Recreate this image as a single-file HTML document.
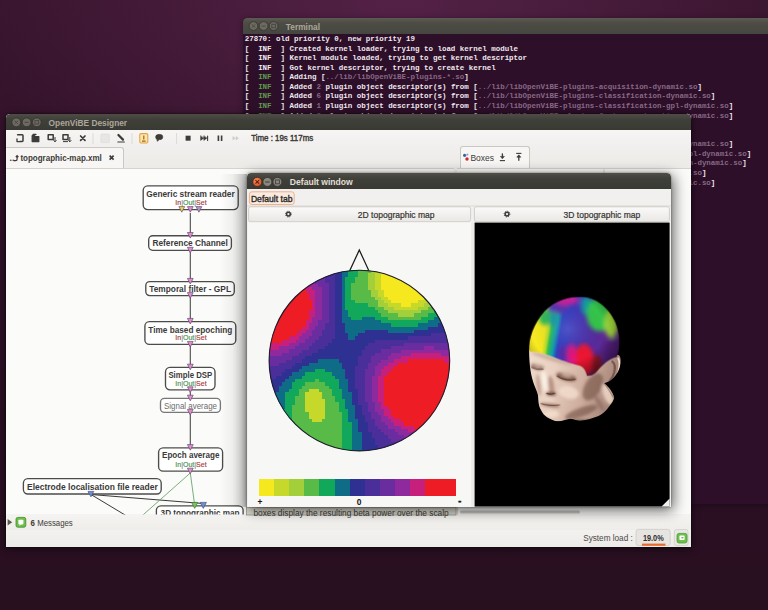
<!DOCTYPE html>
<html><head><meta charset="utf-8"><title>OpenViBE Designer</title>
<style>
*{box-sizing:border-box}
html,body{margin:0;padding:0}
body{width:768px;height:610px;overflow:hidden;position:relative;font-family:"Liberation Sans",sans-serif;background:#2a0f24}
.a{position:absolute}
#bg{position:absolute;left:0;top:0;width:768px;height:610px;
 background:
  radial-gradient(ellipse 430px 250px at 400px 0px, rgba(90,36,76,.8), rgba(90,36,76,0) 100%),
  linear-gradient(180deg,#38152e 0px,#34132b 120px,#2d1027 330px,#2a0f22 520px,#28101f 610px)}
/* ---------- terminal ---------- */
#term{position:absolute;left:243.4px;top:17.5px;width:540px;height:486.5px;background:#2d0f29;border-radius:4px 0 0 0;overflow:hidden;box-shadow:0 1px 6px rgba(0,0,0,.35)}
#term .tb{position:absolute;left:0;top:0;right:0;height:16px;background:linear-gradient(#5b5a53,#4d4d46 30%,#45463f);border-radius:4px 0 0 0}
.wb{position:absolute;width:9px;height:9px;border-radius:50%;background:#6a675f;border:1px solid #3a3833}
.ttl{position:absolute;font-weight:bold;font-size:9px;color:#bdb9ad;letter-spacing:.3px;white-space:nowrap}
#term pre{position:absolute;left:1.3px;top:17.6px;margin:0;font-family:"Liberation Mono",monospace;font-weight:bold;font-size:7.47px;line-height:9.57px;color:#efe9ee;white-space:pre}
#term pre i{font-style:normal;color:#5f9a4e}
#term pre b{font-weight:bold;color:#886886}
/* ---------- designer ---------- */
#des{position:absolute;left:6px;top:113.8px;width:684.6px;height:433.2px;background:#f1f0ee;border-radius:4px 4px 0 0;box-shadow:0 0 2px rgba(0,0,0,.75),0 2px 9px rgba(0,0,0,.55);overflow:hidden}
#des .tb{position:absolute;left:0;top:0;right:0;height:16.5px;background:linear-gradient(#4d4c45,#40403a 35%,#3a3a34);border-radius:4px 4px 0 0}
#des .tool{position:absolute;left:0;top:16.4px;right:0;height:17px;background:linear-gradient(#f6f5f3,#f0efed)}
#des .tabs{position:absolute;left:0;top:33px;right:0;height:21.5px;background:linear-gradient(#f0efed,#ecebe8)}
#des .tab1{position:absolute;left:0;top:33.5px;width:118px;height:22px;background:#f7f6f5;border:1px solid #cbc8c2;border-bottom:none;border-left:none;border-radius:0 3px 0 0}
#des .tab2{position:absolute;left:453.5px;top:32.3px;width:70px;height:22.7px;background:#f7f6f5;border:1px solid #cbc8c2;border-bottom:none;border-radius:3px 3px 0 0}
#des .canvas{position:absolute;left:0;top:54.5px;width:448px;height:346px;background:#fbfbfa;border-top:1px solid #d6d3ce}
#des .rpane{position:absolute;left:451px;top:54.5px;width:234px;height:346px;background:#fafaf9;border-top:1px solid #d6d3ce}
#des .msg{position:absolute;left:0;top:400.7px;right:0;height:16px;background:linear-gradient(#f5f4f2,#eeedea)}
#des .stat{position:absolute;left:0;top:416.7px;right:0;height:16.5px;background:linear-gradient(#f3f2f0,#edebe8)}
.t{position:absolute;white-space:nowrap;color:#3c3b37;line-height:1}
svg{position:absolute;overflow:visible}
/* ---------- default window ---------- */
#dw{position:absolute;left:247px;top:173.3px;width:423.7px;height:333.7px;background:#f1f0ee;border-radius:4px 4px 0 0;box-shadow:2px 3px 14px rgba(0,0,0,.65),0 0 2px rgba(0,0,0,.5);overflow:hidden}
#dw .tb{position:absolute;left:0;top:0;right:0;height:15.9px;background:linear-gradient(#4f4e47,#40403a 35%,#3a3a34);border-radius:4px 4px 0 0}
#dw .btn{position:absolute;top:33px;height:15px;border:1px solid #cfccc6;border-radius:2px;background:linear-gradient(#fbfaf9,#eceae7)}
</style></head>
<body>
<div id="bg"></div>

<div id="term">
 <div class="tb"></div>
 <svg style="left:0;top:0" width="120" height="16"><g stroke="#35332f" stroke-width=".8" fill="#6d6a62"><circle cx="10.5" cy="8.0" r="4.4"/><circle cx="20.6" cy="8.0" r="4.4"/><circle cx="30.6" cy="8.0" r="4.4"/></g><g stroke="#494741" stroke-width="1" fill="none"><path d="M8.9 6.4l3.2 3.2M12.1 6.4l-3.2 3.2"/><path d="M18.6 8.1h4"/><rect x="28.8" y="6.3" width="3.6" height="3.4"/></g><text x="42.8" y="11.6" font-size="9" font-weight="bold" fill="#aba79b" textLength="34.2" lengthAdjust="spacingAndGlyphs" font-family="'Liberation Sans',sans-serif">Terminal</text></svg>
<pre>27870: old priority 0, new priority 19
[  INF  ] Created kernel loader, trying to load kernel module
[  INF  ] Kernel module loaded, trying to get kernel descriptor
[  INF  ] Got kernel descriptor, trying to create kernel
[  <i>INF</i>  ] Adding [<b>../lib/libOpenViBE-plugins-*.so</b>]
[  <i>INF</i>  ] Added <b>2</b> plugin object descriptor(s) from [<b>../lib/libOpenViBE-plugins-acquisition-dynamic.so</b>]
[  <i>INF</i>  ] Added <b>6</b> plugin object descriptor(s) from [<b>../lib/libOpenViBE-plugins-classification-dynamic.so</b>]
[  <i>INF</i>  ] Added <b>1</b> plugin object descriptor(s) from [<b>../lib/libOpenViBE-plugins-classification-gpl-dynamic.so</b>]
[  <i>INF</i>  ] Added <b>8</b> plugin object descriptor(s) from [<b>../lib/libOpenViBE-plugins-feature-extraction-dynamic.so</b>]
[  <i>INF</i>  ] Added <b>9</b> plugin object descriptor(s) from [<b>../lib/libOpenViBE-plugins-file-io-dynamic.so</b>]
[  <i>INF</i>  ] Added <b>1</b> plugin object descriptor(s) from [<b>../lib/libOpenViBE-plugins-matlab-dynamic.so</b>]
[  <i>INF</i>  ] Added <b>28</b> plugin object descriptor(s) from [<b>../lib/libOpenViBE-plugins-signal-processing-dynamic.so</b>]
[  <i>INF</i>  ] Added <b>15</b> plugin object descriptor(s) from [<b>../lib/libOpenViBE-plugins-signal-processing-gpl-dynamic.so</b>]
[  <i>INF</i>  ] Added <b>12</b> plugin object descriptor(s) from [<b>../lib/libOpenViBE-plugins-simple-visualisation-dynamic.so</b>]
[  <i>INF</i>  ] Added <b>27</b> plugin object descriptor(s) from [<b>../lib/libOpenViBE-plugins-stimulation-dynamic.so</b>]
[  <i>INF</i>  ] Added <b>34</b> plugin object descriptor(s) from [<b>../lib/libOpenViBE-plugins-stream-codecs-dynamic.so</b>]</pre>
</div>

<div id="des">
 <div class="tb"></div>
 <svg style="left:0;top:0" width="200" height="17"><g stroke="#35332f" stroke-width=".8" fill="#6d6a62"><circle cx="10.3" cy="8.3" r="4.4"/><circle cx="20.6" cy="8.3" r="4.4"/><circle cx="30.8" cy="8.3" r="4.4"/></g><g stroke="#494741" stroke-width="1" fill="none"><path d="M8.7 6.7l3.2 3.2M11.9 6.7l-3.2 3.2"/><path d="M18.6 8.4h4"/><rect x="29.0" y="6.6" width="3.6" height="3.4"/></g><text x="42.6" y="11.6" font-size="9" font-weight="bold" fill="#aba79b" textLength="78.5" lengthAdjust="spacingAndGlyphs" font-family="'Liberation Sans',sans-serif">OpenViBE Designer</text></svg>
 <div class="tool"></div>
 <div class="tabs"></div>
 <div class="tab1"></div>
 <div class="tab2"></div>
 <div class="canvas"></div>
 <div class="rpane"></div>
 <div class="msg"></div>
 <div class="stat"></div>
</div>
<svg class="a" style="left:0;top:0" width="768" height="610" viewBox="0 0 768 610" font-family="'Liberation Sans',sans-serif">
<defs>
 <clipPath id="cv"><rect x="6" y="169" width="448" height="345.5"/></clipPath>
 <linearGradient id="shR" x1="0" x2="1" y1="0" y2="0"><stop offset="0" stop-color="#000" stop-opacity="0"/><stop offset=".45" stop-color="#000" stop-opacity=".05"/><stop offset=".8" stop-color="#000" stop-opacity=".15"/><stop offset="1" stop-color="#000" stop-opacity=".26"/></linearGradient>
</defs>
<!-- toolbar icons -->
<g stroke="#3c3b37" fill="none" stroke-width="1.3" stroke-linejoin="round" stroke-linecap="round">
 <!-- new -->
 <path d="M17.6 134.8h4.6q.8 0 .8.8v5q0 .8-.8.8h-2.2" stroke-width="1.5"/><path d="M17 138.8v2.8h2.6" stroke-width="1.3"/>
 <!-- open -->
 <path d="M32.2 135.6h2.4l.8 1h3.4v5h-6.6z" fill="#3c3b37"/><path d="M33 134.4h3" stroke-width="1.2"/>
 <!-- save -->
 <path d="M48.2 134.8h5v4.8h-5z" stroke-width="1.5"/><path d="M55 137.4v4.2M53.8 140.6l1.2 1.2 1.2-1.2" stroke-width="1"/>
 <!-- save as -->
 <path d="M63 134.8h5v4.8h-5z" stroke-width="1.5"/><path d="M69.8 137.4v4.2M68.6 140.6l1.2 1.2 1.2-1.2" stroke-width="1"/><path d="M63.4 141.6h4.2" stroke-width="1"/>
 <!-- close -->
 <path d="M80.6 136l4.4 4.4M85 136l-4.4 4.4" stroke-width="1.7"/>
 <!-- pen -->
 <path d="M118.4 135l4.6 4.6" stroke-width="2.2"/><path d="M117.8 142h6.6" stroke-width="1"/>
 <!-- bubble -->
 <path d="M155.8 136.2q0-1.8 3.4-1.8t3.4 1.8v1.6q0 1.8-3.4 1.8l-2 1.6v-1.8q-1.4-.4-1.4-1.6z" fill="#3c3b37" stroke-width=".8"/>
 <!-- stop, next, pause -->
 <rect x="185.6" y="135.7" width="5" height="5" fill="#3c3b37" stroke="none"/>
 <path d="M200.6 136v4.4l3-2.2zM203.8 136v4.4l3-2.2z" fill="#3c3b37" stroke-width=".5"/><path d="M207.6 136v4.4" stroke-width="1.1"/>
 <path d="M218.4 135.6v5.4M221.6 135.6v5.4" stroke-width="1.6" stroke-linecap="butt"/>
</g>
<rect x="100.8" y="134" width="8.6" height="8.6" rx="1" fill="#e8e6e3" stroke="#dcd9d4" stroke-width=".6"/>
<rect x="139.8" y="133.6" width="8" height="9.4" rx="1.2" fill="#fbe6b0" stroke="#e8a33c" stroke-width="1.1"/>
<path d="M143.8 135.6v4M142 141.2h3.6" stroke="#a4641a" stroke-width="1.2" fill="none"/>
<g stroke="#dddad5" stroke-width="1"><path d="M93 133v11M132 133v11M176.6 133v11"/></g>
<g fill="#cfccc6" stroke="none"><path d="M232.6 136v4.4l3-2.2zM235.8 136v4.4l3-2.2z"/></g>
<text x="251.2" y="141.3" font-size="8.4" fill="#3c3b37" textLength="62" lengthAdjust="spacingAndGlyphs" stroke="#3c3b37" stroke-width=".4">Time : 19s 117ms</text>
<!-- tab label -->
<text x="9.6" y="161.2" font-size="8.8" font-weight="bold" fill="#3c3b37">..</text>
<path d="M13.6 160.6h2.2q1.3 0 1.3-1.3v-3.2M15.8 157.2l1.3-1.6 1.3 1.6" stroke="#3c3b37" stroke-width="1.2" fill="none"/>
<text x="20.4" y="161.2" font-size="9" font-weight="bold" fill="#3c3b37" textLength="81.4" lengthAdjust="spacingAndGlyphs">topographic-map.xml</text>
<path d="M109.6 155.6l4 4M113.6 155.6l-4 4" stroke="#3c3b37" stroke-width="1.6" fill="none"/>
<!-- boxes tab -->
<circle cx="464.6" cy="155.3" r="1.6" fill="#3465a4"/><circle cx="467" cy="159" r="1.7" fill="#cc2a2a"/><circle cx="467.4" cy="154.6" r="1.1" fill="#8aa8d0"/>
<text x="470.4" y="160.6" font-size="8.6" fill="#3c3b37" textLength="23.6" lengthAdjust="spacingAndGlyphs">Boxes</text>
<g stroke="#3c3b37" stroke-width="1.3" fill="#3c3b37" stroke-linejoin="round">
 <path d="M502.4 153.4v3.4" /><path d="M500.4 156.4h4l-2 2.4z" stroke-width=".6"/><path d="M499.8 160.6h5.2" stroke-width="1.1"/>
 <path d="M516.2 153.4h5.2" stroke-width="1.1"/><path d="M516.8 157.2h4l-2-2.4z" stroke-width=".6"/><path d="M518.8 157v3.8"/>
</g>
<!-- right pane header line + column sep -->
<path d="M604 169v12" stroke="#d9d6d1" stroke-width="1"/>
<!-- graph -->
<g clip-path="url(#cv)">
 <g stroke="#4a4a48" stroke-width="1.1" fill="none">
  <path d="M190.3 213v22M190.3 250.5v31M190.3 295.5v26M190.3 345v22.5M190.3 390v8.5M190.3 412.5v36"/>
  <path d="M91 494.5L203 503.5M91 494.5L150 530" stroke="#3a3a3a" stroke-width="1"/>
  <path d="M190.3 473L194.4 503M190.3 473L126 530" stroke="#6aa56a" stroke-width=".9"/>
 </g>
 <g fill="#fff" stroke="#4c4c4a" stroke-width="1.35">
  <rect x="143.2" y="185.8" width="95" height="23.8" rx="4.5"/>
  <rect x="148.7" y="235.7" width="82.7" height="14.6" rx="4"/>
  <rect x="145.8" y="281.6" width="88.5" height="14" rx="4"/>
  <rect x="144.9" y="321.6" width="90.9" height="22.8" rx="4.5"/>
  <rect x="165.5" y="367.4" width="49.5" height="22.4" rx="4.5"/>
  <rect x="160.5" y="398.4" width="59.9" height="14" rx="4" stroke="#777"/>
  <rect x="158.6" y="447.8" width="64" height="23.4" rx="4.5"/>
  <rect x="23.4" y="478.6" width="137.8" height="15.4" rx="4.5"/>
  <rect x="156.4" y="505.8" width="86.7" height="22" rx="4.5"/>
 </g>
 <g font-weight="bold" font-size="8.9" fill="#3a3a38" lengthAdjust="spacingAndGlyphs">
  <text x="146.3" y="196.8" textLength="88.4" lengthAdjust="spacingAndGlyphs">Generic stream reader</text>
  <text x="152.4" y="246.2" textLength="75.4" lengthAdjust="spacingAndGlyphs">Reference Channel</text>
  <text x="149.2" y="292" textLength="81.8" lengthAdjust="spacingAndGlyphs">Temporal filter - GPL</text>
  <text x="148.3" y="332.6" textLength="84" lengthAdjust="spacingAndGlyphs">Time based epoching</text>
  <text x="168.4" y="378.4" textLength="43.8" lengthAdjust="spacingAndGlyphs">Simple DSP</text>
  <text x="162" y="458.4" textLength="57.4" lengthAdjust="spacingAndGlyphs">Epoch average</text>
  <text x="27" y="490.2" textLength="130.8" lengthAdjust="spacingAndGlyphs">Electrode localisation file reader</text>
  <text x="160.6" y="516.4" textLength="79" lengthAdjust="spacingAndGlyphs">3D topographic map</text>
 </g>
 <text x="164" y="408.8" font-size="8.7" fill="#6b6b69" textLength="53" lengthAdjust="spacingAndGlyphs">Signal average</text>
 <!-- In|Out|Set labels -->
 <g font-size="7" lengthAdjust="spacingAndGlyphs">
  <g id="ios"><text x="175.3" y="205" fill="#9a4040" stroke-width=".15" stroke="#9a4040">In<tspan fill="#505868" stroke="none">|</tspan><tspan fill="#4a944a" stroke="#4a944a">Out</tspan><tspan fill="#505868" stroke="none">|</tspan><tspan fill="#aa3c3c" stroke="#aa3c3c">Set</tspan></text></g>
  <use href="#ios" y="135"/>
  <g fill="#4a944a" stroke="#4a944a" stroke-width=".15"><text x="175.3" y="386">In<tspan fill="#505868" stroke="none">|</tspan>Out<tspan fill="#505868" stroke="none">|</tspan><tspan fill="#aa3c3c" stroke="#aa3c3c">Set</tspan></text><text x="175.3" y="466.6">In<tspan fill="#505868" stroke="none">|</tspan>Out<tspan fill="#505868" stroke="none">|</tspan><tspan fill="#aa3c3c" stroke="#aa3c3c">Set</tspan></text></g>
 </g>
 <!-- connector triangles -->
 <g stroke="#6d4a78" stroke-width=".7">
  <g fill="#e8d84a"><path d="M178.9 206.6h5.8l-2.9 5.6z"/></g><g fill="#b49ac0"><path d="M196.0 206.6h5.8l-2.9 5.6z"/></g>
  <g fill="#e090cc">
   <path d="M187.4 206.6h5.8l-2.9 5.6z"/>
   <path d="M187.4 232.5h5.8l-2.9 5.6z"/>
   <path d="M187.4 247.3h5.8l-2.9 5.6z"/>
   <path d="M187.4 278.4h5.8l-2.9 5.6z"/>
   <path d="M187.4 292.6h5.8l-2.9 5.6z"/>
   <path d="M187.4 318.4h5.8l-2.9 5.6z"/>
   <path d="M187.4 341.4h5.8l-2.9 5.6z"/>
   <path d="M187.4 364.2h5.8l-2.9 5.6z"/>
   <path d="M187.4 386.8h5.8l-2.9 5.6z"/>
   <path d="M187.4 395.2h5.8l-2.9 5.6z"/>
   <path d="M187.4 409.4h5.8l-2.9 5.6z"/>
   <path d="M187.4 444.6h5.8l-2.9 5.6z"/>
   <path d="M187.4 468.2h5.8l-2.9 5.6z"/>
  </g>
  <path d="M88 491.4h5.8l-2.9 5.4z" fill="#6f8fd0" stroke="#44558a"/>
  <path d="M191.6 502.4h6.2l-3.1 6z" fill="#7cc46a" stroke="#3d7a34"/><path d="M200.2 502.4h6.2l-3.1 6z" fill="#6f8fd0" stroke="#44558a"/>
 </g>
</g>
<!-- shadow cast by default window on canvas -->
<rect x="220" y="174" width="27" height="333" fill="url(#shR)"/>
<!-- strip under default window -->
<rect x="246.5" y="507" width="209.5" height="8" fill="#dad9ce" stroke="#99978f" stroke-width=".8"/>
<svg x="246" y="507" width="212" height="7.6" viewBox="246 507 212 7.6" style="position:static"><text x="253.4" y="515.8" font-size="8.8" fill="#3c3b37" textLength="195.3" lengthAdjust="spacingAndGlyphs">boxes display the resulting beta power over the scalp</text></svg>
<rect x="460" y="510.6" width="120" height="3" rx="1.5" fill="#c9c6c0"/>
<rect x="456.8" y="507" width="1" height="7.5" fill="#cfccc6"/>
<!-- messages row -->
<path d="M7.6 519l4.6 3.2-4.6 3.2z" fill="#5a5955"/>
<rect x="16" y="517.4" width="9.8" height="9.8" rx="1.8" fill="#6cc04a" stroke="#3f8a2a" stroke-width=".8"/>
<rect x="18.4" y="519.8" width="5" height="4.6" rx=".8" fill="#fff"/><path d="M19.8 524.2l-.6 1.8 2-1.8z" fill="#fff"/>
<text x="30.6" y="525.6" font-size="8.8" fill="#3c3b37" textLength="42.2" lengthAdjust="spacingAndGlyphs"><tspan font-weight="bold">6</tspan> Messages</text>
<!-- status bar -->
<text x="583.2" y="541" font-size="8.4" fill="#4a4945" textLength="49.6" lengthAdjust="spacingAndGlyphs">System load :</text>
<rect x="636" y="529.4" width="34.2" height="16.2" rx="2.5" fill="#e6e4e0" stroke="#cfccc6" stroke-width=".8"/>
<rect x="642" y="543.6" width="23.4" height="2.2" fill="#e8692c"/>
<text x="642.9" y="540.8" font-size="8.2" font-weight="bold" fill="#2e2d2a" textLength="20.8" lengthAdjust="spacingAndGlyphs">19.0%</text>
<rect x="674.4" y="529.6" width="13.6" height="16" rx="2" fill="#eae8e5" stroke="#cfccc6" stroke-width=".8"/><rect x="677" y="533.4" width="10" height="9.6" rx="2" fill="#6cc04a" stroke="#4f9a3a" stroke-width=".8"/>
<rect x="679.4" y="535.6" width="5.2" height="4.4" rx=".8" fill="#fff"/><path d="M681.4 537.8h2" stroke="#3f8a2a" stroke-width="1"/>
</svg>


<div id="dw">
 <div class="tb"></div>
</div>
<svg class="a" style="left:0;top:0" width="768" height="610" viewBox="0 0 768 610" font-family="'Liberation Sans',sans-serif">
<defs>
 <clipPath id="circ"><circle cx="360" cy="359.5" r="90.5"/></clipPath>
 <linearGradient id="bt" x1="0" x2="0" y1="0" y2="1"><stop offset="0" stop-color="#fbfaf9"/><stop offset="1" stop-color="#e9e7e4"/></linearGradient>
 <radialGradient id="cl" cx=".4" cy=".35" r=".7"><stop offset="0" stop-color="#f58a5c"/><stop offset="1" stop-color="#d9501e"/></radialGradient>
</defs>
<!-- window buttons -->
<circle cx="257.3" cy="181.9" r="4.6" fill="url(#cl)" stroke="#3a2a22" stroke-width=".8"/>
<path d="M255.5 180.1l3.6 3.6M259.1 180.1l-3.6 3.6" stroke="#5a2410" stroke-width="1.1"/>
<circle cx="267.4" cy="181.9" r="4.5" fill="#8a877e" stroke="#33312d" stroke-width=".8"/><path d="M265.2 182h4.4" stroke="#45433d" stroke-width="1.1"/>
<circle cx="277.4" cy="181.9" r="4.5" fill="#8a877e" stroke="#33312d" stroke-width=".8"/><rect x="275.4" y="180" width="4" height="3.8" fill="none" stroke="#45433d" stroke-width=".9"/>
<text x="289.8" y="185.3" font-size="9.2" font-weight="bold" fill="#e2ded5" textLength="63" lengthAdjust="spacingAndGlyphs">Default window</text>
<!-- tab -->
<rect x="249.4" y="191.8" width="44.8" height="12.7" rx="2.5" fill="#fbeadf" stroke="#eeb18e" stroke-width="1"/>
<text x="250.9" y="201.5" font-size="8.7" fill="#2a2926" textLength="41.6" lengthAdjust="spacingAndGlyphs" stroke="#2a2926" stroke-width=".35">Default tab</text>
<path d="M247 206h424" stroke="#dbd8d3" stroke-width="1"/>
<!-- buttons -->
<rect x="248.6" y="206.8" width="222" height="15" rx="2.2" fill="url(#bt)" stroke="#cdcac4" stroke-width=".9"/>
<rect x="474.4" y="206.8" width="195" height="15" rx="2.2" fill="url(#bt)" stroke="#cdcac4" stroke-width=".9"/>
<g id="gear"><circle cx="288.4" cy="214.1" r="1.9" fill="none" stroke="#3c3b37" stroke-width="1.5"/><circle cx="288.4" cy="214.1" r="2.9" fill="none" stroke="#3c3b37" stroke-width=".9" stroke-dasharray="1.1 1.18"/></g>
<use href="#gear" x="218.6"/>
<text x="357.8" y="217.6" font-size="8.8" fill="#33322f" textLength="76.8" lengthAdjust="spacingAndGlyphs" stroke="#33322f" stroke-width=".2">2D topographic map</text>
<text x="563.6" y="217.6" font-size="8.8" fill="#33322f" textLength="76.6" lengthAdjust="spacingAndGlyphs" stroke="#33322f" stroke-width=".2">3D topographic map</text>
<!-- 2D area -->
<rect x="248" y="222.4" width="223.4" height="284.4" fill="#f7f7f6"/>
<rect x="471.4" y="222.4" width="3" height="284.4" fill="#eceae7"/>
<!-- nose -->
<path d="M349.7 270.8L359.3 250L368.9 270.8Z" fill="#f7f7f6" stroke="#1a1a1a" stroke-width="1.25" stroke-linejoin="miter"/>
<g transform="translate(-.6 1.1)"><g clip-path="url(#circ)" shape-rendering="crispEdges">
<path fill="#4a2f9b" d="M332.5 269.0h3.3v3.6h-3.3zM322.8 272.3h13.0v3.6h-13.0zM325.6 275.6h10.2v3.6h-10.2zM325.6 278.9h10.2v3.6h-10.2zM328.9 282.2h6.9v3.6h-6.9zM328.9 285.5h6.9v3.6h-6.9zM328.9 288.8h6.9v3.6h-6.9zM328.9 292.1h6.9v3.6h-6.9zM328.9 295.4h6.9v3.6h-6.9zM328.9 298.7h6.9v3.6h-6.9zM328.9 302.0h6.9v3.6h-6.9zM328.9 305.3h6.9v3.6h-6.9zM328.9 308.6h6.9v3.6h-6.9zM328.9 311.9h6.9v3.6h-6.9zM328.9 315.2h6.9v3.6h-6.9zM328.9 318.5h6.9v3.6h-6.9zM325.6 321.8h10.2v3.6h-10.2zM325.6 325.1h10.2v3.6h-10.2zM322.3 328.4h13.5v3.6h-13.5zM322.3 331.7h13.5v3.6h-13.5zM431.2 331.7h19.5v3.6h-19.5zM319.0 335.0h16.8v3.6h-16.8zM408.1 335.0h43.5v3.6h-43.5zM315.7 338.3h16.8v3.6h-16.8zM375.1 338.3h77.2v3.6h-77.2zM312.4 341.6h16.8v3.6h-16.8zM368.5 341.6h36.6v3.6h-36.6zM309.1 344.9h16.8v3.6h-16.8zM365.2 344.9h26.7v3.6h-26.7zM302.5 348.2h16.8v3.6h-16.8zM361.9 348.2h20.1v3.6h-20.1zM299.2 351.5h13.5v3.6h-13.5zM361.9 351.5h13.5v3.6h-13.5zM292.6 354.8h13.5v3.6h-13.5zM358.6 354.8h13.5v3.6h-13.5zM286.0 358.1h16.8v3.6h-16.8zM358.6 358.1h13.5v3.6h-13.5zM279.4 361.4h16.8v3.6h-16.8zM358.6 361.4h10.2v3.6h-10.2zM269.5 364.7h23.4v3.6h-23.4zM355.3 364.7h13.5v3.6h-13.5zM269.5 368.0h16.8v3.6h-16.8zM355.3 368.0h10.2v3.6h-10.2zM269.5 371.3h13.5v3.6h-13.5zM355.3 371.3h10.2v3.6h-10.2zM269.5 374.6h6.9v3.6h-6.9zM355.3 374.6h10.2v3.6h-10.2zM269.5 377.9h3.6v3.6h-3.6zM355.3 377.9h10.2v3.6h-10.2zM355.3 381.2h10.2v3.6h-10.2zM355.3 384.5h10.2v3.6h-10.2zM358.6 387.8h6.9v3.6h-6.9zM358.6 391.1h6.9v3.6h-6.9zM358.6 394.4h6.9v3.6h-6.9zM358.6 397.7h6.9v3.6h-6.9zM358.6 401.0h10.2v3.6h-10.2zM361.9 404.3h6.9v3.6h-6.9zM361.9 407.6h6.9v3.6h-6.9zM361.9 410.9h10.2v3.6h-10.2zM365.2 414.2h6.9v3.6h-6.9zM365.2 417.5h10.2v3.6h-10.2zM368.5 420.8h6.9v3.6h-6.9zM368.5 424.1h10.2v3.6h-10.2zM368.5 427.4h13.5v3.6h-13.5zM371.8 430.7h13.5v3.6h-13.5zM371.8 434.0h16.8v3.6h-16.8zM375.1 437.3h16.8v3.6h-16.8zM375.1 440.6h23.4v3.6h-23.4zM378.4 443.9h17.9v3.6h-17.9zM381.7 447.2h4.2v3.6h-4.2z"/>
<path fill="#2e3192" d="M335.5 269.0h6.9v3.6h-6.9zM335.5 272.3h6.9v3.6h-6.9zM335.5 275.6h6.9v3.6h-6.9zM335.5 278.9h6.9v3.6h-6.9zM335.5 282.2h6.9v3.6h-6.9zM335.5 285.5h6.9v3.6h-6.9zM335.5 288.8h6.9v3.6h-6.9zM335.5 292.1h6.9v3.6h-6.9zM335.5 295.4h6.9v3.6h-6.9zM335.5 298.7h6.9v3.6h-6.9zM335.5 302.0h6.9v3.6h-6.9zM335.5 305.3h6.9v3.6h-6.9zM335.5 308.6h6.9v3.6h-6.9zM335.5 311.9h6.9v3.6h-6.9zM335.5 315.2h6.9v3.6h-6.9zM335.5 318.5h6.9v3.6h-6.9zM444.4 318.5h1.5v3.6h-1.5zM335.5 321.8h10.2v3.6h-10.2zM437.8 321.8h9.5v3.6h-9.5zM335.5 325.1h10.2v3.6h-10.2zM427.9 325.1h20.7v3.6h-20.7zM335.5 328.4h10.2v3.6h-10.2zM365.2 328.4h23.4v3.6h-23.4zM414.7 328.4h35.0v3.6h-35.0zM335.5 331.7h13.5v3.6h-13.5zM358.6 331.7h72.9v3.6h-72.9zM335.5 335.0h13.5v3.6h-13.5zM355.3 335.0h53.1v3.6h-53.1zM332.2 338.3h43.2v3.6h-43.2zM328.9 341.6h39.9v3.6h-39.9zM325.6 344.9h39.9v3.6h-39.9zM319.0 348.2h43.2v3.6h-43.2zM312.4 351.5h49.8v3.6h-49.8zM305.8 354.8h53.1v3.6h-53.1zM302.5 358.1h16.8v3.6h-16.8zM338.8 358.1h20.1v3.6h-20.1zM295.9 361.4h13.5v3.6h-13.5zM342.1 361.4h16.8v3.6h-16.8zM292.6 364.7h10.2v3.6h-10.2zM342.1 364.7h13.5v3.6h-13.5zM286.0 368.0h13.5v3.6h-13.5zM345.4 368.0h10.2v3.6h-10.2zM282.7 371.3h10.2v3.6h-10.2zM345.4 371.3h10.2v3.6h-10.2zM276.1 374.6h13.5v3.6h-13.5zM345.4 374.6h10.2v3.6h-10.2zM272.8 377.9h13.5v3.6h-13.5zM348.7 377.9h6.9v3.6h-6.9zM269.5 381.2h13.5v3.6h-13.5zM348.7 381.2h6.9v3.6h-6.9zM269.7 384.5h10.0v3.6h-10.0zM348.7 384.5h6.9v3.6h-6.9zM270.7 387.8h9.0v3.6h-9.0zM348.7 387.8h10.2v3.6h-10.2zM271.9 391.1h4.5v3.6h-4.5zM352.0 391.1h6.9v3.6h-6.9zM273.2 394.4h3.2v3.6h-3.2zM352.0 394.4h6.9v3.6h-6.9zM352.0 397.7h6.9v3.6h-6.9zM352.0 401.0h6.9v3.6h-6.9zM355.3 404.3h6.9v3.6h-6.9zM355.3 407.6h6.9v3.6h-6.9zM355.3 410.9h6.9v3.6h-6.9zM355.3 414.2h10.2v3.6h-10.2zM358.6 417.5h6.9v3.6h-6.9zM358.6 420.8h10.2v3.6h-10.2zM358.6 424.1h10.2v3.6h-10.2zM358.6 427.4h10.2v3.6h-10.2zM361.9 430.7h10.2v3.6h-10.2zM361.9 434.0h10.2v3.6h-10.2zM361.9 437.3h13.5v3.6h-13.5zM361.9 440.6h13.5v3.6h-13.5zM361.9 443.9h16.8v3.6h-16.8zM361.9 447.2h20.1v3.6h-20.1z"/>
<path fill="#0e6c86" d="M342.1 269.0h6.9v3.6h-6.9zM342.1 272.3h6.9v3.6h-6.9zM342.1 275.6h3.6v3.6h-3.6zM342.1 278.9h3.6v3.6h-3.6zM342.1 282.2h3.6v3.6h-3.6zM342.1 285.5h3.6v3.6h-3.6zM342.1 288.8h3.6v3.6h-3.6zM342.1 292.1h3.6v3.6h-3.6zM342.1 295.4h3.6v3.6h-3.6zM342.1 298.7h3.6v3.6h-3.6zM342.1 302.0h3.6v3.6h-3.6zM342.1 305.3h3.6v3.6h-3.6zM342.1 308.6h6.9v3.6h-6.9zM342.1 311.9h6.9v3.6h-6.9zM437.8 311.9h4.7v3.6h-4.7zM342.1 315.2h10.2v3.6h-10.2zM361.9 315.2h13.5v3.6h-13.5zM434.5 315.2h9.8v3.6h-9.8zM342.1 318.5h39.9v3.6h-39.9zM427.9 318.5h16.8v3.6h-16.8zM345.4 321.8h46.5v3.6h-46.5zM418.0 321.8h20.1v3.6h-20.1zM345.4 325.1h82.8v3.6h-82.8zM345.4 328.4h20.1v3.6h-20.1zM388.3 328.4h26.7v3.6h-26.7zM348.7 331.7h10.2v3.6h-10.2zM348.7 335.0h6.9v3.6h-6.9zM319.0 358.1h20.1v3.6h-20.1zM309.1 361.4h33.3v3.6h-33.3zM302.5 364.7h39.9v3.6h-39.9zM299.2 368.0h16.8v3.6h-16.8zM325.6 368.0h20.1v3.6h-20.1zM292.6 371.3h13.5v3.6h-13.5zM332.2 371.3h13.5v3.6h-13.5zM289.3 374.6h13.5v3.6h-13.5zM335.5 374.6h10.2v3.6h-10.2zM286.0 377.9h10.2v3.6h-10.2zM338.8 377.9h10.2v3.6h-10.2zM282.7 381.2h10.2v3.6h-10.2zM338.8 381.2h10.2v3.6h-10.2zM279.4 384.5h13.5v3.6h-13.5zM338.8 384.5h10.2v3.6h-10.2zM279.4 387.8h10.2v3.6h-10.2zM342.1 387.8h6.9v3.6h-6.9zM276.1 391.1h10.2v3.6h-10.2zM342.1 391.1h10.2v3.6h-10.2zM276.1 394.4h10.2v3.6h-10.2zM342.1 394.4h10.2v3.6h-10.2zM274.7 397.7h11.6v3.6h-11.6zM345.4 397.7h6.9v3.6h-6.9zM276.3 401.0h10.0v3.6h-10.0zM345.4 401.0h6.9v3.6h-6.9zM278.1 404.3h8.2v3.6h-8.2zM345.4 404.3h10.2v3.6h-10.2zM280.0 407.6h3.0v3.6h-3.0zM348.7 407.6h6.9v3.6h-6.9zM282.2 410.9h0.8v3.6h-0.8zM348.7 410.9h6.9v3.6h-6.9zM284.6 414.2h1.7v3.6h-1.7zM348.7 414.2h6.9v3.6h-6.9zM348.7 417.5h10.2v3.6h-10.2zM352.0 420.8h6.9v3.6h-6.9zM352.0 424.1h6.9v3.6h-6.9zM352.0 427.4h6.9v3.6h-6.9zM352.0 430.7h10.2v3.6h-10.2zM352.0 434.0h10.2v3.6h-10.2zM352.0 437.3h10.2v3.6h-10.2zM352.0 440.6h10.2v3.6h-10.2zM352.0 443.9h10.2v3.6h-10.2zM352.0 447.2h10.2v3.6h-10.2z"/>
<path fill="#12a85c" d="M348.7 269.0h10.2v3.6h-10.2zM348.7 272.3h10.2v3.6h-10.2zM345.4 275.6h10.2v3.6h-10.2zM345.4 278.9h10.2v3.6h-10.2zM345.4 282.2h6.9v3.6h-6.9zM345.4 285.5h6.9v3.6h-6.9zM345.4 288.8h6.9v3.6h-6.9zM345.4 292.1h6.9v3.6h-6.9zM345.4 295.4h6.9v3.6h-6.9zM345.4 298.7h10.2v3.6h-10.2zM345.4 302.0h23.4v3.6h-23.4zM345.4 305.3h30.0v3.6h-30.0zM437.8 305.3h0.6v3.6h-0.6zM348.7 308.6h30.0v3.6h-30.0zM434.5 308.6h6.1v3.6h-6.1zM348.7 311.9h33.3v3.6h-33.3zM427.9 311.9h10.2v3.6h-10.2zM352.0 315.2h10.2v3.6h-10.2zM375.1 315.2h13.5v3.6h-13.5zM421.3 315.2h13.5v3.6h-13.5zM381.7 318.5h46.5v3.6h-46.5zM391.6 321.8h26.7v3.6h-26.7zM315.7 368.0h10.2v3.6h-10.2zM305.8 371.3h26.7v3.6h-26.7zM302.5 374.6h33.3v3.6h-33.3zM295.9 377.9h20.1v3.6h-20.1zM319.0 377.9h20.1v3.6h-20.1zM292.6 381.2h13.5v3.6h-13.5zM325.6 381.2h13.5v3.6h-13.5zM292.6 384.5h10.2v3.6h-10.2zM328.9 384.5h10.2v3.6h-10.2zM289.3 387.8h10.2v3.6h-10.2zM332.2 387.8h10.2v3.6h-10.2zM286.0 391.1h13.5v3.6h-13.5zM332.2 391.1h10.2v3.6h-10.2zM286.0 394.4h10.2v3.6h-10.2zM335.5 394.4h6.9v3.6h-6.9zM286.0 397.7h10.2v3.6h-10.2zM335.5 397.7h10.2v3.6h-10.2zM286.0 401.0h10.2v3.6h-10.2zM338.8 401.0h6.9v3.6h-6.9zM286.0 404.3h6.9v3.6h-6.9zM338.8 404.3h6.9v3.6h-6.9zM282.7 407.6h10.2v3.6h-10.2zM338.8 407.6h10.2v3.6h-10.2zM282.7 410.9h10.2v3.6h-10.2zM342.1 410.9h6.9v3.6h-6.9zM286.0 414.2h6.9v3.6h-6.9zM342.1 414.2h6.9v3.6h-6.9zM287.2 417.5h5.7v3.6h-5.7zM342.1 417.5h6.9v3.6h-6.9zM290.1 420.8h6.1v3.6h-6.1zM342.1 420.8h10.2v3.6h-10.2zM293.3 424.1h2.9v3.6h-2.9zM342.1 424.1h10.2v3.6h-10.2zM342.1 427.4h10.2v3.6h-10.2zM342.1 430.7h10.2v3.6h-10.2zM342.1 434.0h10.2v3.6h-10.2zM342.1 437.3h10.2v3.6h-10.2zM342.1 440.6h10.2v3.6h-10.2zM342.1 443.9h10.2v3.6h-10.2zM342.1 447.2h10.2v3.6h-10.2z"/>
<path fill="#58ba47" d="M358.6 269.0h13.5v3.6h-13.5zM358.6 272.3h10.2v3.6h-10.2zM355.3 275.6h13.5v3.6h-13.5zM355.3 278.9h13.5v3.6h-13.5zM352.0 282.2h16.8v3.6h-16.8zM352.0 285.5h16.8v3.6h-16.8zM352.0 288.8h20.1v3.6h-20.1zM352.0 292.1h20.1v3.6h-20.1zM352.0 295.4h23.4v3.6h-23.4zM355.3 298.7h23.4v3.6h-23.4zM368.5 302.0h10.2v3.6h-10.2zM431.2 302.0h4.9v3.6h-4.9zM375.1 305.3h10.2v3.6h-10.2zM427.9 305.3h10.2v3.6h-10.2zM378.4 308.6h10.2v3.6h-10.2zM421.3 308.6h13.5v3.6h-13.5zM381.7 311.9h16.8v3.6h-16.8zM414.7 311.9h13.5v3.6h-13.5zM388.3 315.2h33.3v3.6h-33.3zM315.7 377.9h3.6v3.6h-3.6zM305.8 381.2h20.1v3.6h-20.1zM302.5 384.5h26.7v3.6h-26.7zM299.2 387.8h10.2v3.6h-10.2zM319.0 387.8h13.5v3.6h-13.5zM299.2 391.1h6.9v3.6h-6.9zM322.3 391.1h10.2v3.6h-10.2zM295.9 394.4h10.2v3.6h-10.2zM322.3 394.4h13.5v3.6h-13.5zM295.9 397.7h10.2v3.6h-10.2zM325.6 397.7h10.2v3.6h-10.2zM295.9 401.0h10.2v3.6h-10.2zM325.6 401.0h13.5v3.6h-13.5zM292.6 404.3h13.5v3.6h-13.5zM325.6 404.3h13.5v3.6h-13.5zM292.6 407.6h13.5v3.6h-13.5zM325.6 407.6h13.5v3.6h-13.5zM292.6 410.9h16.8v3.6h-16.8zM325.6 410.9h16.8v3.6h-16.8zM292.6 414.2h16.8v3.6h-16.8zM325.6 414.2h16.8v3.6h-16.8zM292.6 417.5h20.1v3.6h-20.1zM322.3 417.5h20.1v3.6h-20.1zM295.9 420.8h46.5v3.6h-46.5zM295.9 424.1h46.5v3.6h-46.5zM296.9 427.4h45.5v3.6h-45.5zM300.8 430.7h41.6v3.6h-41.6zM305.3 434.0h37.1v3.6h-37.1zM310.5 437.3h31.9v3.6h-31.9zM316.5 440.6h25.9v3.6h-25.9zM324.0 443.9h18.4v3.6h-18.4zM334.4 447.2h8.0v3.6h-8.0z"/>
<path fill="#a3cf3a" d="M371.8 269.0h6.9v3.6h-6.9zM368.5 272.3h6.9v3.6h-6.9zM368.5 275.6h6.9v3.6h-6.9zM368.5 278.9h6.9v3.6h-6.9zM368.5 282.2h6.9v3.6h-6.9zM368.5 285.5h6.9v3.6h-6.9zM371.8 288.8h6.9v3.6h-6.9zM371.8 292.1h6.9v3.6h-6.9zM375.1 295.4h6.9v3.6h-6.9zM378.4 298.7h6.9v3.6h-6.9zM427.9 298.7h5.6v3.6h-5.6zM378.4 302.0h10.2v3.6h-10.2zM424.6 302.0h6.9v3.6h-6.9zM385.0 305.3h10.2v3.6h-10.2zM418.0 305.3h10.2v3.6h-10.2zM388.3 308.6h33.3v3.6h-33.3zM398.2 311.9h16.8v3.6h-16.8z"/>
<path fill="#c6d92b" d="M378.4 269.0h3.6v3.6h-3.6zM375.1 272.3h6.9v3.6h-6.9zM375.1 275.6h6.9v3.6h-6.9zM375.1 278.9h6.9v3.6h-6.9zM375.1 282.2h6.9v3.6h-6.9zM375.1 285.5h6.9v3.6h-6.9zM378.4 288.8h6.9v3.6h-6.9zM378.4 292.1h6.9v3.6h-6.9zM424.6 292.1h2.9v3.6h-2.9zM381.7 295.4h6.9v3.6h-6.9zM424.6 295.4h6.0v3.6h-6.0zM385.0 298.7h6.9v3.6h-6.9zM418.0 298.7h10.2v3.6h-10.2zM388.3 302.0h13.5v3.6h-13.5zM411.4 302.0h13.5v3.6h-13.5zM394.9 305.3h23.4v3.6h-23.4zM309.1 387.8h10.2v3.6h-10.2zM305.8 391.1h16.8v3.6h-16.8zM305.8 394.4h16.8v3.6h-16.8zM305.8 397.7h20.1v3.6h-20.1zM305.8 401.0h20.1v3.6h-20.1zM305.8 404.3h20.1v3.6h-20.1zM305.8 407.6h20.1v3.6h-20.1zM309.1 410.9h16.8v3.6h-16.8zM309.1 414.2h16.8v3.6h-16.8zM312.4 417.5h10.2v3.6h-10.2z"/>
<path fill="#f6e81f" d="M381.7 269.0h6.1v3.6h-6.1zM381.7 272.3h15.8v3.6h-15.8zM381.7 275.6h23.1v3.6h-23.1zM381.7 278.9h29.0v3.6h-29.0zM381.7 282.2h34.0v3.6h-34.0zM381.7 285.5h38.4v3.6h-38.4zM385.0 288.8h39.0v3.6h-39.0zM385.0 292.1h39.9v3.6h-39.9zM388.3 295.4h36.6v3.6h-36.6zM391.6 298.7h26.7v3.6h-26.7zM401.5 302.0h10.2v3.6h-10.2z"/>
<path fill="#8e2a9d" d="M315.5 275.6h0.5v3.6h-0.5zM309.6 278.9h6.4v3.6h-6.4zM309.1 282.2h10.2v3.6h-10.2zM312.4 285.5h10.2v3.6h-10.2zM315.7 288.8h6.9v3.6h-6.9zM315.7 292.1h6.9v3.6h-6.9zM315.7 295.4h6.9v3.6h-6.9zM315.7 298.7h6.9v3.6h-6.9zM315.7 302.0h6.9v3.6h-6.9zM315.7 305.3h6.9v3.6h-6.9zM315.7 308.6h6.9v3.6h-6.9zM315.7 311.9h6.9v3.6h-6.9zM312.4 315.2h10.2v3.6h-10.2zM312.4 318.5h6.9v3.6h-6.9zM309.1 321.8h10.2v3.6h-10.2zM309.1 325.1h6.9v3.6h-6.9zM305.8 328.4h6.9v3.6h-6.9zM302.5 331.7h10.2v3.6h-10.2zM299.2 335.0h10.2v3.6h-10.2zM295.9 338.3h10.2v3.6h-10.2zM289.3 341.6h10.2v3.6h-10.2zM279.4 344.9h16.8v3.6h-16.8zM424.6 344.9h10.2v3.6h-10.2zM269.5 348.2h20.1v3.6h-20.1zM401.5 348.2h49.8v3.6h-49.8zM269.5 351.5h13.5v3.6h-13.5zM391.6 351.5h20.1v3.6h-20.1zM441.1 351.5h12.9v3.6h-12.9zM388.3 354.8h13.5v3.6h-13.5zM451.0 354.8h3.1v3.6h-3.1zM381.7 358.1h13.5v3.6h-13.5zM378.4 361.4h10.2v3.6h-10.2zM375.1 364.7h10.2v3.6h-10.2zM375.1 368.0h6.9v3.6h-6.9zM375.1 371.3h6.9v3.6h-6.9zM371.8 374.6h6.9v3.6h-6.9zM371.8 377.9h6.9v3.6h-6.9zM371.8 381.2h6.9v3.6h-6.9zM371.8 384.5h6.9v3.6h-6.9zM371.8 387.8h6.9v3.6h-6.9zM371.8 391.1h6.9v3.6h-6.9zM371.8 394.4h6.9v3.6h-6.9zM371.8 397.7h6.9v3.6h-6.9zM375.1 401.0h6.9v3.6h-6.9zM375.1 404.3h6.9v3.6h-6.9zM375.1 407.6h10.2v3.6h-10.2zM378.4 410.9h6.9v3.6h-6.9zM381.7 414.2h6.9v3.6h-6.9zM381.7 417.5h10.2v3.6h-10.2zM385.0 420.8h10.2v3.6h-10.2zM388.3 424.1h13.5v3.6h-13.5zM394.9 427.4h13.5v3.6h-13.5zM398.2 430.7h20.1v3.6h-20.1zM404.8 434.0h10.2v3.6h-10.2z"/>
<path fill="#6a2d9f" d="M315.7 275.6h10.2v3.6h-10.2zM315.7 278.9h10.2v3.6h-10.2zM319.0 282.2h10.2v3.6h-10.2zM322.3 285.5h6.9v3.6h-6.9zM322.3 288.8h6.9v3.6h-6.9zM322.3 292.1h6.9v3.6h-6.9zM322.3 295.4h6.9v3.6h-6.9zM322.3 298.7h6.9v3.6h-6.9zM322.3 302.0h6.9v3.6h-6.9zM322.3 305.3h6.9v3.6h-6.9zM322.3 308.6h6.9v3.6h-6.9zM322.3 311.9h6.9v3.6h-6.9zM322.3 315.2h6.9v3.6h-6.9zM319.0 318.5h10.2v3.6h-10.2zM319.0 321.8h6.9v3.6h-6.9zM315.7 325.1h10.2v3.6h-10.2zM312.4 328.4h10.2v3.6h-10.2zM312.4 331.7h10.2v3.6h-10.2zM309.1 335.0h10.2v3.6h-10.2zM305.8 338.3h10.2v3.6h-10.2zM299.2 341.6h13.5v3.6h-13.5zM404.8 341.6h48.1v3.6h-48.1zM295.9 344.9h13.5v3.6h-13.5zM391.6 344.9h33.3v3.6h-33.3zM434.5 344.9h18.9v3.6h-18.9zM289.3 348.2h13.5v3.6h-13.5zM381.7 348.2h20.1v3.6h-20.1zM451.0 348.2h2.7v3.6h-2.7zM282.7 351.5h16.8v3.6h-16.8zM375.1 351.5h16.8v3.6h-16.8zM269.5 354.8h23.4v3.6h-23.4zM371.8 354.8h16.8v3.6h-16.8zM269.5 358.1h16.8v3.6h-16.8zM371.8 358.1h10.2v3.6h-10.2zM269.5 361.4h10.2v3.6h-10.2zM368.5 361.4h10.2v3.6h-10.2zM368.5 364.7h6.9v3.6h-6.9zM365.2 368.0h10.2v3.6h-10.2zM365.2 371.3h10.2v3.6h-10.2zM365.2 374.6h6.9v3.6h-6.9zM365.2 377.9h6.9v3.6h-6.9zM365.2 381.2h6.9v3.6h-6.9zM365.2 384.5h6.9v3.6h-6.9zM365.2 387.8h6.9v3.6h-6.9zM365.2 391.1h6.9v3.6h-6.9zM365.2 394.4h6.9v3.6h-6.9zM365.2 397.7h6.9v3.6h-6.9zM368.5 401.0h6.9v3.6h-6.9zM368.5 404.3h6.9v3.6h-6.9zM368.5 407.6h6.9v3.6h-6.9zM371.8 410.9h6.9v3.6h-6.9zM371.8 414.2h10.2v3.6h-10.2zM375.1 417.5h6.9v3.6h-6.9zM375.1 420.8h10.2v3.6h-10.2zM378.4 424.1h10.2v3.6h-10.2zM381.7 427.4h13.5v3.6h-13.5zM385.0 430.7h13.5v3.6h-13.5zM388.3 434.0h16.8v3.6h-16.8zM391.6 437.3h18.2v3.6h-18.2zM398.2 440.6h5.6v3.6h-5.6z"/>
<path fill="#c71f7c" d="M304.6 282.2h4.8v3.6h-4.8zM305.8 285.5h6.9v3.6h-6.9zM305.8 288.8h10.2v3.6h-10.2zM309.1 292.1h6.9v3.6h-6.9zM309.1 295.4h6.9v3.6h-6.9zM312.4 298.7h3.6v3.6h-3.6zM312.4 302.0h3.6v3.6h-3.6zM312.4 305.3h3.6v3.6h-3.6zM309.1 308.6h6.9v3.6h-6.9zM309.1 311.9h6.9v3.6h-6.9zM309.1 315.2h3.6v3.6h-3.6zM305.8 318.5h6.9v3.6h-6.9zM305.8 321.8h3.6v3.6h-3.6zM302.5 325.1h6.9v3.6h-6.9zM299.2 328.4h6.9v3.6h-6.9zM295.9 331.7h6.9v3.6h-6.9zM289.3 335.0h10.2v3.6h-10.2zM282.7 338.3h13.5v3.6h-13.5zM269.5 341.6h20.1v3.6h-20.1zM269.5 344.9h10.2v3.6h-10.2zM411.4 351.5h30.0v3.6h-30.0zM401.5 354.8h49.8v3.6h-49.8zM394.9 358.1h13.5v3.6h-13.5zM444.4 358.1h9.7v3.6h-9.7zM388.3 361.4h10.2v3.6h-10.2zM451.0 361.4h3.1v3.6h-3.1zM385.0 364.7h10.2v3.6h-10.2zM381.7 368.0h10.2v3.6h-10.2zM381.7 371.3h6.9v3.6h-6.9zM378.4 374.6h6.9v3.6h-6.9zM378.4 377.9h6.9v3.6h-6.9zM378.4 381.2h6.9v3.6h-6.9zM378.4 384.5h6.9v3.6h-6.9zM378.4 387.8h6.9v3.6h-6.9zM378.4 391.1h6.9v3.6h-6.9zM378.4 394.4h6.9v3.6h-6.9zM378.4 397.7h6.9v3.6h-6.9zM381.7 401.0h3.6v3.6h-3.6zM381.7 404.3h6.9v3.6h-6.9zM385.0 407.6h6.9v3.6h-6.9zM385.0 410.9h6.9v3.6h-6.9zM388.3 414.2h6.9v3.6h-6.9zM391.6 417.5h10.2v3.6h-10.2zM394.9 420.8h10.2v3.6h-10.2zM401.5 424.1h13.5v3.6h-13.5zM408.1 427.4h15.3v3.6h-15.3zM418.0 430.7h1.5v3.6h-1.5z"/>
<path fill="#ee1c25" d="M300.2 285.5h5.9v3.6h-5.9zM296.3 288.8h3.2v3.6h-3.2zM299.2 288.8h6.9v3.6h-6.9zM292.8 292.1h10.0v3.6h-10.0zM302.5 292.1h6.9v3.6h-6.9zM289.7 295.4h16.4v3.6h-16.4zM305.8 295.4h3.6v3.6h-3.6zM286.8 298.7h19.3v3.6h-19.3zM305.8 298.7h6.9v3.6h-6.9zM284.2 302.0h21.9v3.6h-21.9zM305.8 302.0h6.9v3.6h-6.9zM281.9 305.3h24.2v3.6h-24.2zM305.8 305.3h6.9v3.6h-6.9zM279.7 308.6h26.4v3.6h-26.4zM305.8 308.6h3.6v3.6h-3.6zM277.8 311.9h28.3v3.6h-28.3zM305.8 311.9h3.6v3.6h-3.6zM276.0 315.2h26.8v3.6h-26.8zM302.5 315.2h6.9v3.6h-6.9zM274.4 318.5h28.4v3.6h-28.4zM302.5 318.5h3.6v3.6h-3.6zM273.0 321.8h26.5v3.6h-26.5zM299.2 321.8h6.9v3.6h-6.9zM271.7 325.1h24.5v3.6h-24.5zM295.9 325.1h6.9v3.6h-6.9zM270.6 328.4h22.3v3.6h-22.3zM292.6 328.4h6.9v3.6h-6.9zM269.6 331.7h16.7v3.6h-16.7zM286.0 331.7h10.2v3.6h-10.2zM269.5 335.0h20.1v3.6h-20.1zM269.5 338.3h13.5v3.6h-13.5zM408.1 358.1h36.6v3.6h-36.6zM398.2 361.4h13.5v3.6h-13.5zM411.4 361.4h30.0v3.6h-30.0zM441.1 361.4h10.2v3.6h-10.2zM394.9 364.7h10.2v3.6h-10.2zM404.8 364.7h43.2v3.6h-43.2zM447.7 364.7h6.3v3.6h-6.3zM391.6 368.0h6.9v3.6h-6.9zM398.2 368.0h55.5v3.6h-55.5zM388.3 371.3h6.9v3.6h-6.9zM394.9 371.3h58.4v3.6h-58.4zM385.0 374.6h6.9v3.6h-6.9zM391.6 374.6h61.2v3.6h-61.2zM385.0 377.9h6.9v3.6h-6.9zM391.6 377.9h60.6v3.6h-60.6zM385.0 381.2h6.9v3.6h-6.9zM391.6 381.2h59.9v3.6h-59.9zM385.0 384.5h3.6v3.6h-3.6zM388.3 384.5h62.3v3.6h-62.3zM385.0 387.8h3.6v3.6h-3.6zM388.3 387.8h61.3v3.6h-61.3zM385.0 391.1h3.6v3.6h-3.6zM388.3 391.1h60.1v3.6h-60.1zM385.0 394.4h6.9v3.6h-6.9zM391.6 394.4h55.5v3.6h-55.5zM385.0 397.7h6.9v3.6h-6.9zM391.6 397.7h54.0v3.6h-54.0zM385.0 401.0h6.9v3.6h-6.9zM391.6 401.0h52.4v3.6h-52.4zM388.3 404.3h6.9v3.6h-6.9zM394.9 404.3h47.3v3.6h-47.3zM391.6 407.6h6.9v3.6h-6.9zM398.2 407.6h42.1v3.6h-42.1zM391.6 410.9h10.2v3.6h-10.2zM401.5 410.9h36.6v3.6h-36.6zM394.9 414.2h10.2v3.6h-10.2zM404.8 414.2h30.9v3.6h-30.9zM401.5 417.5h10.2v3.6h-10.2zM411.4 417.5h21.7v3.6h-21.7zM404.8 420.8h16.8v3.6h-16.8zM421.3 420.8h8.9v3.6h-8.9zM414.7 424.1h12.3v3.6h-12.3z"/>
</g>
<circle cx="360" cy="359.5" r="90.3" fill="none" stroke="#1c1c2a" stroke-width="1.1"/></g>
<!-- colour bar -->
<g shape-rendering="crispEdges">
<rect x="259" y="479" width="15.4" height="17" fill="#f6e81f"/><rect x="274.1" y="479" width="15.4" height="17" fill="#c6d92b"/><rect x="289.2" y="479" width="15.4" height="17" fill="#a3cf3a"/><rect x="304.3" y="479" width="15.4" height="17" fill="#58ba47"/><rect x="319.4" y="479" width="15.4" height="17" fill="#12a85c"/><rect x="334.5" y="479" width="15.4" height="17" fill="#0e6c86"/><rect x="349.6" y="479" width="15.4" height="17" fill="#2e3192"/><rect x="364.7" y="479" width="15.4" height="17" fill="#4a2f9b"/><rect x="379.8" y="479" width="15.4" height="17" fill="#6a2d9f"/><rect x="394.9" y="479" width="15.4" height="17" fill="#8e2a9d"/><rect x="410" y="479" width="15.4" height="17" fill="#c71f7c"/><rect x="425.1" y="479" width="30.7" height="17" fill="#ee1c25"/>
</g>
<g font-size="8.4" font-weight="bold" fill="#111"><text x="257.4" y="504.6">+</text><text x="356.8" y="504.6">0</text><text x="458.2" y="503.8" font-size="9" stroke="#111" stroke-width=".5">-</text></g>
<!-- 3D area -->
<rect x="474.6" y="222.6" width="195" height="284" fill="#000"/>
<path d="M669.6 498.6v8h-8z" fill="#f1f0ee"/>
<defs>
 <filter id="b6" x="-50%" y="-50%" width="200%" height="200%"><feGaussianBlur stdDeviation="9"/></filter>
 <filter id="b3" x="-50%" y="-50%" width="200%" height="200%"><feGaussianBlur stdDeviation="6"/></filter>
 <filter id="b1" x="-50%" y="-50%" width="200%" height="200%"><feGaussianBlur stdDeviation="2.5"/></filter>
 <clipPath id="scalp"><path d="M40 272C38 215 60 150 108 95C158 42 225 28 275 30C335 33 392 80 420 140C442 190 446 255 427 296C405 300 380 316 350 348C335 368 322 380 296 381C292 360 282 340 262 334C225 326 180 308 120 286C90 276 62 272 40 272Z"/></clipPath>
 <clipPath id="face"><path d="M40 266C40 300 43 335 47 359C51 385 57 402 62 417C69 437 77 450 79 463C81 478 81 488 82 498C84 510 87 520 91 527C99 545 109 555 120 562C137 572 151 579 167 580C185 581 200 573 219 569C235 567 250 578 266 577C295 575 322 567 347 557C365 549 382 531 393 516C402 503 412 491 416 476C410 450 392 430 372 412C394 405 422 390 437 350C447 325 448 300 438 289C432 283 425 289 424 296L400 200L100 200Z"/></clipPath>
 <linearGradient id="skin" x1="0" x2="1" y1="0" y2=".25"><stop offset="0" stop-color="#f2dfd0"/><stop offset=".35" stop-color="#ead2c2"/><stop offset=".7" stop-color="#cdac9c"/><stop offset="1" stop-color="#a08074"/></linearGradient>
 <linearGradient id="rain" gradientUnits="userSpaceOnUse" x1="40" y1="200" x2="440" y2="265"><stop offset="0" stop-color="#f8ea20"/><stop offset=".16" stop-color="#f2e820"/><stop offset=".2" stop-color="#b4dc30"/><stop offset=".23" stop-color="#30c050"/><stop offset=".28" stop-color="#10a0b0"/><stop offset=".33" stop-color="#3040c4"/><stop offset=".5" stop-color="#4236b8"/><stop offset=".75" stop-color="#5a2a9a"/><stop offset="1" stop-color="#6a2890"/></linearGradient>
 <radialGradient id="shade" cx=".42" cy=".4" r=".62"><stop offset="0" stop-color="#fff" stop-opacity=".12"/><stop offset=".6" stop-color="#000" stop-opacity="0"/><stop offset="1" stop-color="#000" stop-opacity=".5"/></radialGradient>
</defs>
<g transform="translate(520 290) scale(.22635)">
 <!-- face -->
 <g clip-path="url(#face)">
  <rect x="20" y="190" width="450" height="410" fill="url(#skin)"/>
  <g filter="url(#b3)">
   <ellipse cx="322" cy="428" rx="36" ry="66" fill="#7a584c" opacity=".7" transform="rotate(30 322 428)"/>
   <ellipse cx="270" cy="540" rx="76" ry="20" fill="#7c5a4e" opacity=".7" transform="rotate(-20 270 540)"/>
   <ellipse cx="290" cy="592" rx="110" ry="18" fill="#3a2420" opacity=".9"/>
   <ellipse cx="388" cy="462" rx="20" ry="50" fill="#e8d0c0" opacity=".95" transform="rotate(-22 388 462)"/>
   <ellipse cx="350" cy="500" rx="10" ry="40" fill="#8a685c" opacity=".7" transform="rotate(-30 350 500)"/>
   <ellipse cx="140" cy="303" rx="95" ry="9" fill="#b08a7a" opacity=".55" transform="rotate(16 140 303)"/>
   <ellipse cx="76" cy="340" rx="30" ry="12" fill="#80584c" opacity=".85" transform="rotate(14 76 340)"/>
   <ellipse cx="204" cy="384" rx="46" ry="16" fill="#7a5246" opacity=".9" transform="rotate(14 204 384)"/>
   <ellipse cx="82" cy="420" rx="9" ry="50" fill="#b08c7c" opacity=".75" transform="rotate(-6 82 420)"/>
   <ellipse cx="138" cy="420" rx="12" ry="42" fill="#a07868" opacity=".7" transform="rotate(-8 138 420)"/>
   <ellipse cx="138" cy="458" rx="22" ry="9" fill="#6a463c" opacity=".9"/>
   <ellipse cx="132" cy="508" rx="44" ry="7" fill="#80584c" opacity=".8" transform="rotate(8 132 508)"/>
   <ellipse cx="108" cy="402" rx="11" ry="48" fill="#fdf2e8" opacity=".95" transform="rotate(-7 108 402)"/>
   <ellipse cx="215" cy="452" rx="46" ry="28" fill="#f2dccc" opacity=".85" transform="rotate(15 215 452)"/>
   <ellipse cx="138" cy="548" rx="36" ry="16" fill="#f4dece" opacity=".85"/>
   <ellipse cx="78" cy="336" rx="16" ry="5" fill="#e2c4b2" opacity=".8" transform="rotate(14 78 336)"/>
   <ellipse cx="205" cy="377" rx="24" ry="7" fill="#e2c4b2" opacity=".8" transform="rotate(14 205 377)"/>
   <ellipse cx="125" cy="485" rx="30" ry="7" fill="#efd8c8" opacity=".8" transform="rotate(8 125 485)"/>
  </g>
  <g filter="url(#b1)" fill="none" stroke-linecap="round">
   <path d="M52 342q22 12 50 8" stroke="#4a2c26" stroke-width="4" opacity=".85"/>
   <path d="M166 380q34 24 78 14" stroke="#4a2c26" stroke-width="5" opacity=".9"/>
   <path d="M94 502q32 12 80 6" stroke="#5a342c" stroke-width="4" opacity=".85"/>
   <path d="M118 456q14 8 34 0" stroke="#4a2c26" stroke-width="5" opacity=".85"/>
   <path d="M408 316q16 12 8 48q-6 24 -20 38" stroke="#6a4a42" stroke-width="10" opacity=".8"/>
   <path d="M434 302q10 22 0 62" stroke="#f6e2d4" stroke-width="8" opacity=".95"/>
   <path d="M372 412q22 30 40 62" stroke="#7a584c" stroke-width="5" opacity=".6"/>
  </g>
 </g>
 <!-- scalp -->
 <g clip-path="url(#scalp)">
  <rect x="30" y="20" width="430" height="380" fill="url(#rain)"/>
  <g filter="url(#b6)">
   <ellipse cx="112" cy="120" rx="30" ry="36" fill="#30b858"/>
   <ellipse cx="165" cy="76" rx="46" ry="30" fill="#5a30b0"/>
   <ellipse cx="150" cy="130" rx="18" ry="36" fill="#1898a8"/>
   <ellipse cx="205" cy="42" rx="52" ry="26" fill="#c8209a"/>
   <ellipse cx="298" cy="70" rx="30" ry="44" fill="#1898a0"/>
   <ellipse cx="352" cy="108" rx="58" ry="74" fill="#34c44c"/>
   <ellipse cx="404" cy="150" rx="30" ry="62" fill="#a4e03c"/>
   <ellipse cx="420" cy="275" rx="50" ry="60" fill="#5a2488"/>
   <ellipse cx="192" cy="285" rx="22" ry="40" fill="#5a2ca8"/>
   <ellipse cx="282" cy="312" rx="44" ry="74" fill="#ee1830"/>
   <ellipse cx="228" cy="290" rx="20" ry="54" fill="#e01880"/>
   <ellipse cx="340" cy="335" rx="24" ry="50" fill="#901828"/>
   <ellipse cx="64" cy="230" rx="30" ry="66" fill="#f8ea20"/>
  </g>
  <rect x="30" y="20" width="430" height="380" fill="url(#shade)"/>
 </g>
</g>

</svg>


</body></html>
